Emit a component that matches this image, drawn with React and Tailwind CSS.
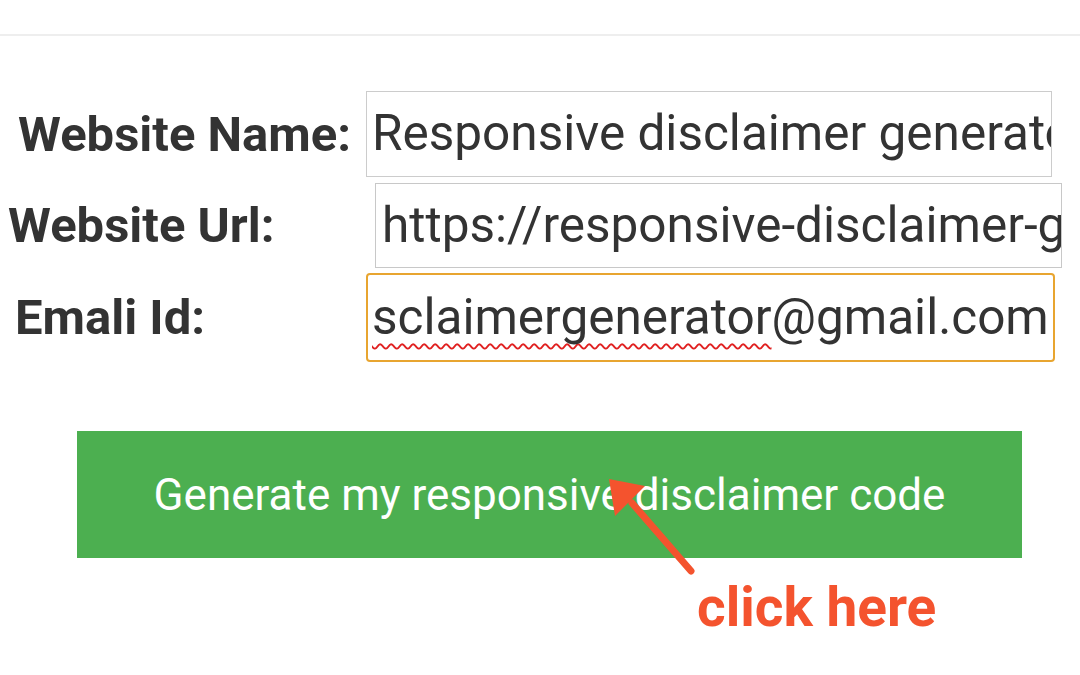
import React from 'react';

const fieldText = 'text-[49.5px] leading-none text-[#333] whitespace-nowrap overflow-hidden';
const labelText = 'text-[49px] font-bold text-[#333] leading-none whitespace-nowrap';

export default function App() {
  return (
    <div className="w-[1080px] h-[675px] bg-white font-['Roboto',sans-serif] relative overflow-hidden">
      <div className="h-[34px]" />
      <div className="h-[2px] bg-[#eeeeee]" />

      <div className="pt-[55px] flex flex-col">
        {/* row 1 */}
        <div className="flex items-center h-[86px]">
          <div className={`w-[366px] pl-[18px] ${labelText}`}>Website Name:</div>
          <div className={`w-[686px] h-[86px] border border-[#cccccc] flex items-center pl-[5px] ${fieldText}`}>
            Responsive disclaimer generator
          </div>
        </div>

        {/* row 2 */}
        <div className="flex items-center h-[85px] mt-[6px]">
          <div className={`w-[375px] pl-[8px] ${labelText}`}>Website Url:</div>
          <div className={`w-[687px] h-[85px] border border-[#c8c8c8] flex items-center pl-[6px] ${fieldText}`}>
            https://responsive-disclaimer-generator.blogspot.com
          </div>
        </div>

        {/* row 3 */}
        <div className="flex items-center h-[89px] mt-[5px]">
          <div className={`w-[366px] pl-[15px] ${labelText}`}>Emali Id:</div>
          <div className={`w-[689px] h-[89px] border-2 border-[#e8a530] rounded-[4px] flex items-center pl-[4px] ${fieldText}`}>
            <span className="underline decoration-wavy decoration-[#e02020] decoration-[2px] underline-offset-[9px] [text-decoration-skip-ink:none]">sclaimergenerator</span>
            <span>@gmail.com</span>
          </div>
        </div>
      </div>

      <div className="mt-[69px] ml-[77px] w-[945px] h-[127px] bg-[#4caf50] flex items-center justify-center text-white text-[44px]">
        Generate my responsive disclaimer code
      </div>

      <div className="ml-[697px] mt-[22px] text-[55px] font-bold leading-none text-[#f4532e]">click here</div>

      {/* annotation arrow */}
      <svg className="absolute left-0 top-0" width="1080" height="675" viewBox="0 0 1080 675">
        <line x1="691" y1="571" x2="632" y2="503" stroke="#f4532e" strokeWidth="7" strokeLinecap="round" />
        <polygon points="609,479 645,486 615,516" fill="#f4532e" />
      </svg>
    </div>
  );
}
